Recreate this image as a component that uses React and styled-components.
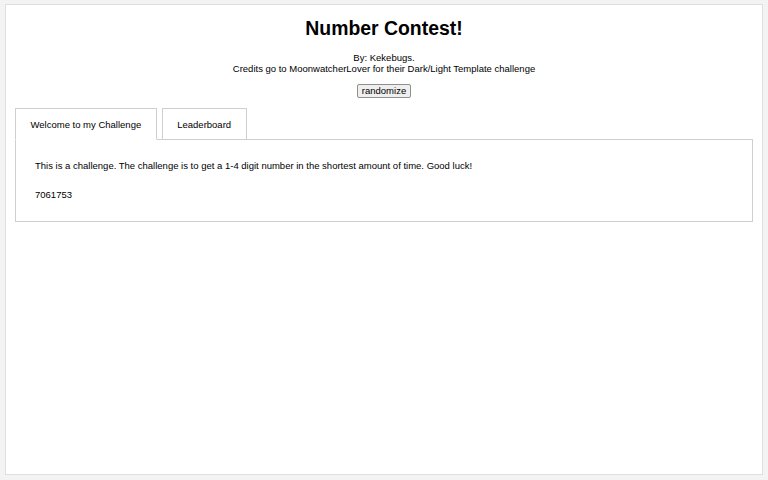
import React, { useState } from "react";
import styled, { createGlobalStyle } from "styled-components";

const Global = createGlobalStyle`
  html, body {
    margin: 0;
    padding: 0;
    background: #f3f3f3;
    font-family: "Liberation Sans", Arial, sans-serif;
    color: #000;
  }
`;

const Page = styled.div`
  padding: 4px 5px 5px 5px;
  height: 480px;
  box-sizing: border-box;
`;

const Card = styled.div`
  background: #fff;
  border: 1px solid #dedede;
  height: 100%;
  box-sizing: border-box;
  padding: 10px 9px;
`;

const Header = styled.header`
  display: flex;
  flex-direction: column;
  align-items: center;
  text-align: center;
`;

const Title = styled.h1`
  margin: 1px 0 0 0;
  font-size: 19.4px;
  line-height: 24px;
  font-weight: bold;
`;

const Byline = styled.p`
  margin: 12px 0 0 0;
  font-size: 9.5px;
  line-height: 11px;
`;

const Button = styled.button`
  margin-top: 10px;
  font-family: "Liberation Sans", Arial, sans-serif;
  font-size: 9.5px;
  line-height: 12px;
  padding: 0 4px;
  background: #efefef;
  border: 1px solid #8f8f8f;
  border-radius: 2px;
  color: #000;
`;

const Tabs = styled.div`
  margin-top: 10px;
  display: flex;
  gap: 5px;
  position: relative;
  z-index: 1;
`;

const Tab = styled.button`
  font-family: "Liberation Sans", Arial, sans-serif;
  font-size: 9.5px;
  height: 32px;
  padding: 0 14.5px;
  background: #fff;
  color: #000;
  border: 1px solid #cfcfcf;
  border-bottom-color: ${(p) => (p.$active ? "#fff" : "#cfcfcf")};
  margin-bottom: -1px;
  cursor: pointer;
`;

const Panel = styled.section`
  border: 1px solid #cfcfcf;
  padding: 20px 19px 20px 19px;
  font-size: 9.5px;
  line-height: 12px;
`;

const Para = styled.p`
  margin: 0 0 17px 0;
  &:last-child {
    margin-bottom: 0;
  }
`;

export default function App() {
  const [tab, setTab] = useState(0);
  const [num, setNum] = useState(7061753);
  return (
    <>
      <Global />
      <Page>
        <Card>
          <Header>
            <Title>Number Contest!</Title>
            <Byline>
              By: Kekebugs.
              <br />
              Credits go to MoonwatcherLover for their Dark/Light Template challenge
            </Byline>
            <Button onClick={() => setNum(Math.floor(Math.random() * 10000000))}>
              randomize
            </Button>
          </Header>
          <Tabs>
            <Tab $active={tab === 0} onClick={() => setTab(0)}>
              Welcome to my Challenge
            </Tab>
            <Tab $active={tab === 1} onClick={() => setTab(1)}>
              Leaderboard
            </Tab>
          </Tabs>
          <Panel>
            {tab === 0 ? (
              <>
                <Para>
                  This is a challenge. The challenge is to get a 1-4 digit number in the shortest
                  amount of time. Good luck!
                </Para>
                <Para>{num}</Para>
              </>
            ) : (
              <Para>No entries yet.</Para>
            )}
          </Panel>
        </Card>
      </Page>
    </>
  );
}
